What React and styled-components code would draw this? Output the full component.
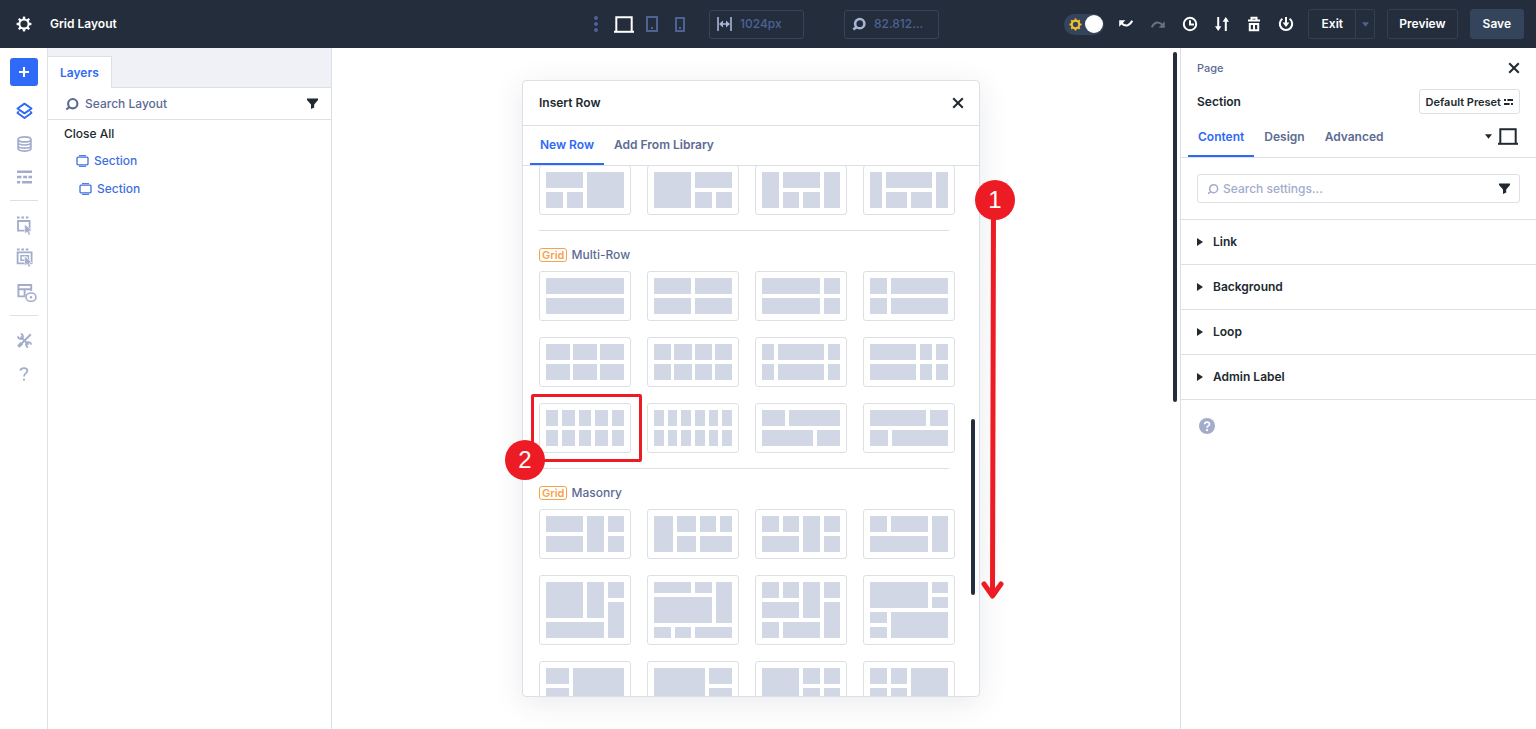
import React from "react";
import styled, { createGlobalStyle, css } from "styled-components";

const c = {
  bar: "#232d3b",
  barLine: "#36435a",
  barMuted: "#4f6296",
  blue: "#2e6af6",
  text: "#20292f",
  muted: "#5c6b94",
  icon: "#a3accb",
  line: "#dcdfe4",
  block: "#d2d7e5",
  orange: "#f7a14c",
  red: "#ed1c24",
};

const GlobalStyle = createGlobalStyle`
  *, *::before, *::after { box-sizing: border-box; }
  body {
    margin: 0;
    background: #fff;
    color: ${c.text};
    font: 500 12px/16px Inter, "Liberation Sans", sans-serif;
  }
  button, input { font: inherit; color: inherit; }
  button { padding: 0; border: 0; background: none; cursor: pointer; }
  svg { display: block; flex: none; }
`;

const Page = styled.div`
  display: flex;
  flex-direction: column;
  height: 100vh;
`;

/* ---------- top bar ---------- */

const TopBar = styled.header`
  display: grid;
  grid-template-columns: 1fr auto 1fr;
  align-items: center;
  flex: none;
  height: 48px;
  padding: 0 12px;
  background: ${c.bar};
  color: #fff;
`;

const BarLeft = styled.div`
  display: flex;
  align-items: center;
  gap: 14px;
`;

const BarTitle = styled.h1`
  margin: 0;
  font-size: 12px;
  line-height: 16px;
  font-weight: 600;
`;

const BarCenter = styled.div`
  display: flex;
  align-items: center;
  padding-right: 15px;
`;

const IconButton = styled.button`
  display: flex;
  align-items: center;
  justify-content: center;
  width: ${(p) => p.$w || 28}px;
  height: 28px;
  color: ${(p) => p.$color || "inherit"};
`;

const Fields = styled.div`
  display: flex;
  gap: 40px;
  margin-left: 15px;
`;

const BarField = styled.label`
  display: flex;
  align-items: center;
  gap: 8px;
  width: 95px;
  height: 29px;
  padding: 0 7px;
  border: 1px solid ${c.barLine};
  border-radius: 3px;
  color: #a9b5d6;

  input {
    flex: 1;
    min-width: 0;
    padding: 0;
    border: 0;
    outline: 0;
    background: none;
    color: ${c.barMuted};
  }
`;

const BarRight = styled.div`
  display: flex;
  align-items: center;
  justify-content: flex-end;
  gap: 12px;
`;

const BarTools = styled.div`
  display: flex;
  align-items: center;
  margin-right: -6px;
`;

const Toggle = styled.label`
  display: flex;
  align-items: center;
  justify-content: space-between;
  width: 40px;
  height: 21px;
  margin-right: 6px;
  padding: 0 1px 0 5px;
  border-radius: 11px;
  background: #34445a;

  input {
    appearance: none;
    width: 18px;
    height: 18px;
    margin: 0;
    border-radius: 50%;
    background: #fff;
  }
`;

const BarButton = styled.button`
  height: 30px;
  padding: 0 ${(p) => (p.$filled ? 12 : 11)}px;
  border: 1px solid ${(p) => (p.$filled ? "#34445a" : "#334052")};
  border-radius: 3px;
  background: ${(p) => (p.$filled ? "#34445a" : "transparent")};
  font-weight: 600;
  white-space: nowrap;
`;

const SplitButton = styled.div`
  display: flex;
  height: 30px;
  border: 1px solid #334052;
  border-radius: 3px;

  button:first-child { width: 46px; font-weight: 600; }
  button:last-child {
    display: flex;
    align-items: center;
    justify-content: center;
    width: 19px;
    border-left: 1px solid #334052;
    color: ${c.barMuted};
  }
`;

/* ---------- body columns ---------- */

const Body = styled.div`
  display: flex;
  flex: 1;
  min-height: 0;
`;

const Rail = styled.nav`
  display: flex;
  flex-direction: column;
  align-items: center;
  flex: none;
  width: 48px;
  padding: 10px 0 0 1px;
  border-right: 1px solid ${c.line};
  color: ${c.icon};

  hr {
    width: 28px;
    margin: 7px 0 8px;
    border: 0;
    border-top: 1px solid ${c.line};
  }
`;

const AddButton = styled.button`
  display: flex;
  align-items: center;
  justify-content: center;
  width: 28px;
  height: 28px;
  margin-bottom: 8px;
  border-radius: 3px;
  background: ${c.blue};
  color: #fff;
`;

const RailButton = styled.button`
  display: flex;
  align-items: center;
  justify-content: center;
  width: 28px;
  height: 33px;
  color: ${(p) => (p.$active ? c.blue : "inherit")};
`;

const LayersPanel = styled.aside`
  flex: none;
  width: 284px;
  border-right: 1px solid ${c.line};
`;

const PanelTabs = styled.div`
  display: flex;
  height: 40px;
  padding-top: 8px;
  border-bottom: 1px solid ${c.line};
  background: #f0f1f7;
`;

const PanelTab = styled.button`
  height: 32px;
  padding: 0 12px;
  border: 1px solid ${c.line};
  border-width: 1px 1px 0 0;
  background: #fff;
  color: ${c.blue};
  font-weight: 600;
`;

const SearchRow = styled.div`
  display: flex;
  align-items: center;
  height: 32px;
  padding: 0 12px 0 17px;
  border-bottom: 1px solid ${c.line};
`;

const SearchLabel = styled.label`
  display: flex;
  align-items: center;
  flex: 1;
  gap: ${(p) => (p.$light ? 4 : 6)}px;
  min-width: 0;
  color: ${(p) => (p.$light ? c.icon : c.muted)};

  input {
    flex: 1;
    min-width: 0;
    padding: 0;
    border: 0;
    outline: 0;
    background: none;
  }
  input::placeholder { color: inherit; opacity: 1; }
`;

const CloseAll = styled.button`
  display: block;
  margin: 6px 16px 5px;
`;

const Tree = styled.ul`
  margin: 0;
  padding: 0 0 0 28px;
  list-style: none;

  & & { padding-left: 3px; }
`;

const TreeItem = styled.button`
  display: flex;
  align-items: center;
  gap: 5px;
  height: 28px;
  color: #3f6fe0;
`;

const Canvas = styled.main`
  display: flex;
  justify-content: center;
  flex: 1;
  min-width: 0;
  padding: 32px 16px;
`;

const CanvasScroll = styled.div`
  flex: none;
  width: 10px;
  padding: 4px 3px;

  &::before {
    content: "";
    display: block;
    width: 4px;
    height: 52%;
    border-radius: 2px;
    background: ${c.bar};
  }
`;

/* ---------- insert row dialog ---------- */

const Dialog = styled.section`
  position: relative;
  display: flex;
  flex-direction: column;
  width: 458px;
  border: 1px solid ${c.line};
  border-radius: 4px;
  box-shadow: 0 6px 30px rgba(43, 50, 80, 0.1);
`;

const DialogHead = styled.header`
  display: flex;
  align-items: center;
  justify-content: space-between;
  flex: none;
  height: 45px;
  padding: 0 14px 0 16px;
  border-bottom: 1px solid ${c.line};

  h2 { margin: 0; font-size: 12px; line-height: 16px; font-weight: 600; }
`;

const CloseButton = styled.button`
  display: flex;
  align-items: center;
  justify-content: center;
  width: ${(p) => p.$w || 14}px;
  height: 16px;
`;

const Tabs = styled.div`
  display: flex;
  align-items: stretch;
  flex: none;
  height: 40px;
  padding: 0 7px;
  border-bottom: 1px solid ${c.line};
`;

const Tab = styled.button`
  padding: 0 10px 2px;
  color: ${c.muted};
  font-weight: 600;
  ${(p) =>
    p.$active &&
    css`
      color: ${c.blue};
      box-shadow: inset 0 -2px ${c.blue};
    `}
`;

const RowList = styled.div`
  flex: 1;
  min-height: 0;
  margin-top: -1px;
  padding: 0 24px 0 16px;
  overflow: hidden;

  hr {
    margin: 15px 6px 15px 0;
    border: 0;
    border-top: 1px solid ${c.line};
  }
`;

const GroupTitle = styled.h3`
  display: flex;
  align-items: center;
  gap: 4px;
  margin: 0 0 8px;
  padding-top: 1px;
  color: ${c.muted};
  font-size: 12px;
  line-height: 16px;
  font-weight: 500;
`;

const GridBadge = styled.span`
  padding: 0 2px;
  border: 1px solid ${c.orange};
  border-radius: 3px;
  color: ${c.orange};
  font-size: 11px;
  line-height: 12px;
  font-weight: 600;
`;

const Cards = styled.div`
  display: grid;
  grid-template-columns: repeat(4, 1fr);
  gap: 16px;
`;

const Card = styled.button`
  display: grid;
  height: ${(p) => (p.$tall ? 70 : 50)}px;
  padding: 6px;
  border: 1px solid ${c.line};
  border-radius: 3px;
  grid-template-columns: ${(p) => p.$cols};
  grid-template-rows: ${(p) => p.$rows};
  grid-template-areas: ${(p) => p.$areas};
  gap: 4px ${(p) => p.$gap}px;
`;

const Block = styled.span`
  grid-area: ${(p) => p.$area};
  background: ${c.block};
`;

const DialogScroll = styled.div`
  position: absolute;
  top: 55%;
  right: 4px;
  width: 4px;
  height: 176px;
  border-radius: 2px;
  background: ${c.bar};
`;

/* ---------- callouts drawn over the dialog ---------- */

const StepBadge = styled.span`
  position: absolute;
  left: ${(p) => p.$x}px;
  top: ${(p) => p.$y}px;
  display: flex;
  align-items: center;
  justify-content: center;
  width: 40px;
  height: 40px;
  border-radius: 50%;
  background: ${c.red};
  color: #fff;
  font: 400 24px/40px "Liberation Sans", sans-serif;
`;

const Highlight = styled.span`
  position: absolute;
  left: 8px;
  top: 313px;
  width: 111px;
  height: 68px;
  border: 3px solid ${c.red};
  border-radius: 2px;
`;

const Arrow = styled.svg`
  position: absolute;
  left: 456px;
  top: 130px;
`;

/* ---------- settings panel ---------- */

const Settings = styled.aside`
  flex: none;
  width: 356px;
  border-left: 1px solid ${c.line};
`;

const SettingsHead = styled.div`
  padding: 12px 16px 4px;
`;

const HeadRow = styled.div`
  display: flex;
  align-items: center;
  justify-content: space-between;
  margin-bottom: ${(p) => p.$after || 0}px;

  h2 { margin: 0; font-size: 12px; line-height: 16px; font-weight: 600; }
`;

const Crumb = styled.a`
  color: ${c.muted};
  font-size: 11px;
  text-decoration: none;
`;

const PresetButton = styled.button`
  display: flex;
  align-items: center;
  gap: 3px;
  height: 25px;
  padding: 0 6px;
  border: 1px solid ${c.line};
  border-radius: 3px;
  font-size: 11px;
  font-weight: 600;
`;

const DeviceButton = styled.button`
  display: flex;
  align-items: center;
  gap: 6px;
  margin-left: auto;
  padding: 0 11px 2px 0;
`;

const SearchBox = styled.div`
  display: flex;
  align-items: center;
  height: 29px;
  margin: 16px;
  padding: 0 9px;
  border: 1px solid ${c.line};
  border-radius: 3px;
`;

const Group = styled.button`
  display: flex;
  align-items: center;
  gap: 10px;
  width: 100%;
  height: 45px;
  padding: 0 16px;
  border-top: 1px solid ${c.line};
  font-weight: 600;
`;

const Help = styled.div`
  padding: 12px 18px;
  border-top: 1px solid ${c.line};
`;

/* ---------- icons ---------- */

const Svg = ({ w = 16, h = w, sw = 2, children, vb }) => (
  <svg width={w} height={h} viewBox={vb || `0 0 ${w} ${h}`} fill="none" stroke="currentColor" strokeWidth={sw} aria-hidden="true">
    {children}
  </svg>
);

const Gear = ({ size = 16, sw = 2 }) => (
  <Svg w={size} vb="0 0 16 16" sw={sw}>
    <circle cx="8" cy="8" r="4.6" />
    {[0, 45, 90, 135, 180, 225, 270, 315].map((a) => (
      <path key={a} d="M8 3.4V.6" strokeWidth="2.4" transform={`rotate(${a} 8 8)`} />
    ))}
  </Svg>
);
const Search = ({ sw = 2, size = 13 }) => (
  <Svg w={size} vb="0 0 13 13" sw={sw}>
    <circle cx="7.2" cy="6.2" r="4.3" />
    <path d="M4.4 9.2L1.2 11.6" />
  </Svg>
);
const Funnel = () => (
  <Svg w={11} sw={0}>
    <path d="M0 .5h11v1.6L7.2 6.4v3L4 11V6.4L0 2.1z" fill="currentColor" />
  </Svg>
);
const Cross = () => (
  <Svg w={12}>
    <path d="M1.200 1.200l9.600 9.600M10.800 1.200l-9.600 9.600" />
  </Svg>
);
const Laptop = () => (
  <Svg w={20} h={17}>
    <path d="M2.3 15V1.200h15.400V15" />
    <path d="M0 15.800h20" />
  </Svg>
);
const Tablet = () => (
  <Svg w={12} h={16}>
    <path d="M1 1h10v14H1z" />
    <path d="M5 12h2" />
  </Svg>
);
const Phone = () => (
  <Svg w={10} h={15}>
    <path d="M1 1h8v13H1z" />
    <path d="M4 11h2" />
  </Svg>
);
const Dots = () => (
  <Svg w={4} h={16} sw={0}>
    {[2, 8, 14].map((y) => <circle key={y} cx="2" cy={y} r="2" fill="currentColor" />)}
  </Svg>
);
const WidthIcon = () => (
  <Svg w={15} h={14} sw={1.6}>
    <path d="M1 0v14M14 0v14M4 7h7" />
    <path d="M2 7l4-3.6v7.2zM13 7L9 3.4v7.2z" fill="currentColor" stroke="none" />
  </Svg>
);
const Undo = ({ flip }) => (
  <Svg w={16} h={12}>
    <g transform={flip ? "rotate(180 8 6)" : undefined}>
      <path d="M3.500 5.200Q9.500 10.800 14.300 2.800" />
      <path d="M1.200 2.200h6.200L1.200 8.800z" fill="currentColor" stroke="none" />
    </g>
  </Svg>
);
const Clock = () => (
  <Svg w={16}>
    <circle cx="8" cy="8" r="6.2" />
    <path d="M8 4.2V8.6h4" />
  </Svg>
);
const UpDown = () => (
  <Svg w={16}>
    <path d="M4.200 1v12M11.800 3v12" />
    <path d="M1 10.200h6.400L4.200 15zM8.600 5.800h6.400L11.800 1z" fill="currentColor" stroke="none" />
  </Svg>
);
const Trash = () => (
  <Svg w={14} h={16}>
    <path d="M1 4.5h12M4.5 4V1.800h5V4M2.800 7v7.200h8.400V7M1.800 8h10.400M7 8v6" />
  </Svg>
);
const Power = () => (
  <Svg w={16}>
    <path d="M4.4 2.8a6.2 6.2 0 1 0 7.2 0" />
    <path d="M8 1v7" />
    <path d="M4.6 6.6h6.8L8 11z" fill="currentColor" stroke="none" />
  </Svg>
);
const CaretDown = ({ w = 8 }) => (
  <Svg w={w} h={5} vb="0 0 8 5" sw={0}>
    <path d="M0 0h8L4 5z" fill="currentColor" />
  </Svg>
);
const CaretRight = () => (
  <Svg w={6} h={8} sw={0}>
    <path d="M0 0l6 4-6 4z" fill="currentColor" />
  </Svg>
);
const Plus = () => (
  <Svg w={10}>
    <path d="M5 0v10M0 5h10" />
  </Svg>
);
const Layers = () => (
  <Svg w={17} h={18} sw={1.9}>
    <path d="M8.5 1.6l7 4.9-7 4.9-7-4.9z" strokeLinejoin="round" />
    <path d="M2.8 9.2L1.5 11l7 5 7-5-1.3-1.8" strokeLinejoin="round" />
  </Svg>
);
const Database = () => (
  <Svg w={15} h={16} sw={1.7}>
    <ellipse cx="7.5" cy="3.4" rx="6.4" ry="2.5" />
    <path d="M1.1 3.4v9.2c0 3.3 12.8 3.3 12.8 0V3.4M1.1 6.6c0 3.2 12.8 3.2 12.8 0M1.1 9.8c0 3.2 12.8 3.2 12.8 0" />
  </Svg>
);
const Wireframe = () => (
  <Svg w={15} h={14} sw={2.6}>
    <path d="M0 1.800h15M0 7h4.500M6.200 7h3.800M11.500 7H15M0 12.200h3.200M5 12.200h10" />
  </Svg>
);
const Cursor = () => <path d="M8.6 8.2l7.4 6.4-3 .4 1.5 3.4-1.9.8-1.4-3.4-2.4 2z" fill="currentColor" stroke="#fff" strokeWidth=".6" />;
const SelectIcon = () => (
  <Svg w={16} h={20} sw={1.8}>
    <path d="M1 1.5h2.6M5.4 1.5H8M9.8 1.5h2.6" strokeWidth="2" />
    <path d="M2 14.6V5h11.6v9.6z" />
    <Cursor />
  </Svg>
);
const MultiSelect = () => (
  <Svg w={17} h={21} sw={1.8}>
    <path d="M1 1.5h2.6M5.4 1.5H8M9.8 1.5h2.6" strokeWidth="2" />
    <path d="M1.6 15.4V4.4h14v11z" />
    <path d="M5 12.2V7.8h7.4v4.4z" strokeWidth="1.5" />
    <Cursor />
  </Svg>
);
const LayoutEye = () => (
  <Svg w={26} h={20} vb="-6 -1 26 20" sw={1.9}>
    <path d="M8 13.4H1.4V2h12.8v6M1.4 6.2h12.8M7.6 6.2v7" />
    <ellipse cx="14" cy="14.2" rx="5" ry="4.2" fill="#fff" strokeWidth="1.6" />
    <circle cx="14" cy="14.2" r="1.2" fill="currentColor" stroke="none" />
  </Svg>
);
const Tools = () => (
  <Svg w={15}>
    <path d="M3.6 3.6l8 8" strokeWidth="2" />
    <path d="M.8 3.4a2.8 2.8 0 0 0 4.6 1.8A2.8 2.8 0 0 0 3.8.8M14.2 11.6a2.8 2.8 0 0 0-4.6-1.8 2.8 2.8 0 0 0 1.6 4.4" strokeWidth="1.8" />
    <path d="M13.8 1.2L1.6 13.6" strokeWidth="2" />
    <path d="M4.8 10.2L1.4 13.6" strokeWidth="3.4" />
  </Svg>
);
const Question = () => (
  <Svg w={10} h={14} sw={1.8}>
    <path d="M1.4 3.6C1.8.2 8.6.2 8.4 3.8 8.3 6.2 5 6.2 5 9.6" />
    <path d="M4 12.6h2" />
  </Svg>
);
const SectionIcon = () => (
  <Svg w={13} h={12} sw={1.3}>
    <rect x="1" y="2.2" width="11" height="7.6" rx="1" />
    <path d="M3 .6h7M3 11.4h7" strokeWidth="1" />
  </Svg>
);
const PresetIcon = () => (
  <Svg w={9} h={8}>
    <path d="M0 2h2M3.4 2H9M0 6h5.6M7 6h2" />
  </Svg>
);
const HelpIcon = () => (
  <Svg w={16} sw={0}>
    <circle cx="8" cy="8" r="8" fill={c.icon} />
    <path d="M5.6 6.2c.2-2.9 5-2.8 4.9 0C10.4 8 8 7.8 8 9.8" stroke="#fff" strokeWidth="1.7" />
    <circle cx="8" cy="12.2" r="1.1" fill="#fff" />
  </Svg>
);

/* ---------- data ---------- */

const fr = (...n) => n.map((v) => `minmax(0, ${v}fr)`).join(" ");
const four = fr(1, 1, 1, 1);
const three = fr(1, 1, 1);

const offsetRows = [
  { areas: ["a a b b", "c d b b"], cols: four },
  { areas: ["a a b b", "a a c d"], cols: four },
  { areas: ["a b b c", "a d e c"], cols: four },
  { areas: ["a b b c", "a d e c"], cols: fr(4, 7, 7, 4) },
];
const multiRows = [
  { areas: ["a", "b"], cols: fr(1) },
  { areas: ["a b", "c d"], cols: fr(1, 1) },
  { areas: ["a a a b", "c c c d"], cols: four },
  { areas: ["a b b b", "c d d d"], cols: four },
  { areas: ["a b c", "d e f"], cols: three, gap: 3 },
  { areas: ["a b c d", "e f g h"], cols: four, gap: 3 },
  { areas: ["a b c", "d e f"], cols: fr(6, 23, 6) },
  { areas: ["a b c", "d e f"], cols: fr(23, 6, 6) },
  { areas: ["a b c d e", "f g h i j"], cols: fr(1, 1, 1, 1, 1) },
  { areas: ["a b c d e f", "g h i j k l"], cols: fr(1, 1, 1, 1, 1, 1) },
  { areas: ["a b b", "c c d"], cols: three },
  { areas: ["a a b", "c d d"], cols: fr(9, 17, 9) },
];
const masonryRows = [
  { areas: ["a a b c", "d d b e"], cols: four },
  { areas: ["a b c d", "a e f f"], cols: fr(19, 19, 16, 12) },
  { areas: ["a b c d", "e e c f"], cols: four },
  { areas: ["a b b c", "d d d c"], cols: four },
  { areas: ["a a b c", "a a b d", "e e e d"], cols: four, tall: true },
  { areas: ["a a b c", "d d d c", "e f g g"], cols: four, rows: fr(11, 26, 11), tall: true },
  { areas: ["a b c d", "e e c f", "g h h f"], cols: four, tall: true },
  { areas: ["a a a b", "a a a c", "d e e e", "f e e e"], cols: four, tall: true },
  { areas: ["a b b", "c b b"], cols: three },
  { areas: ["a a b", "a a c"], cols: three },
  { areas: ["a a b c", "a a d e"], cols: four },
  { areas: ["a b c c", "d e c c"], cols: four },
];

function RowCards({ items, name }) {
  return (
    <Cards>
      {items.map(({ areas, cols, rows, gap = 4, tall }, i) => (
        <Card
          key={i}
          aria-label={`${name} ${i + 1}`}
          $cols={cols}
          $rows={rows || fr(...areas.map(() => 1))}
          $areas={areas.map((r) => `"${r}"`).join(" ")}
          $gap={gap}
          $tall={tall}
        >
          {[...new Set(areas.join(" ").split(" "))].map((a) => (
            <Block key={a} $area={a} />
          ))}
        </Card>
      ))}
    </Cards>
  );
}

export default function App() {
  return (
    <Page>
      <GlobalStyle />
      <TopBar>
        <BarLeft>
          <IconButton $w={24} aria-label="Settings"><Gear /></IconButton>
          <BarTitle>Grid Layout</BarTitle>
        </BarLeft>
        <BarCenter>
          <IconButton $color={c.barMuted} aria-label="More"><Dots /></IconButton>
          <IconButton aria-label="Desktop"><Laptop /></IconButton>
          <IconButton $color={c.barMuted} aria-label="Tablet"><Tablet /></IconButton>
          <IconButton $color={c.barMuted} aria-label="Phone"><Phone /></IconButton>
          <Fields>
            <BarField><WidthIcon /><input aria-label="Canvas width" defaultValue="1024px" /></BarField>
            <BarField><Search sw={2.4} size={14} /><input aria-label="Zoom" defaultValue="82.812..." /></BarField>
          </Fields>
        </BarCenter>
        <BarRight>
          <BarTools>
            <Toggle>
              <IconButton as="span" $w={13} $color="#f2c12e"><Gear size={13} sw={2.6} /></IconButton>
              <input type="checkbox" aria-label="Light mode" defaultChecked />
            </Toggle>
            <IconButton $w={32} aria-label="Undo"><Undo /></IconButton>
            <IconButton $w={32} $color="#68717d" aria-label="Redo"><Undo flip /></IconButton>
            <IconButton $w={32} aria-label="History"><Clock /></IconButton>
            <IconButton $w={32} aria-label="Portability"><UpDown /></IconButton>
            <IconButton $w={32} aria-label="Clear"><Trash /></IconButton>
            <IconButton $w={32} aria-label="Save to library"><Power /></IconButton>
          </BarTools>
          <SplitButton>
            <button>Exit</button>
            <button aria-label="Exit options"><CaretDown w={7} /></button>
          </SplitButton>
          <BarButton>Preview</BarButton>
          <BarButton $filled>Save</BarButton>
        </BarRight>
      </TopBar>

      <Body>
        <Rail>
          <AddButton aria-label="Add"><Plus /></AddButton>
          <RailButton $active aria-label="Layers"><Layers /></RailButton>
          <RailButton aria-label="Data"><Database /></RailButton>
          <RailButton aria-label="Wireframe"><Wireframe /></RailButton>
          <hr />
          <RailButton aria-label="Select"><SelectIcon /></RailButton>
          <RailButton aria-label="Multi select"><MultiSelect /></RailButton>
          <RailButton aria-label="View layout"><LayoutEye /></RailButton>
          <hr />
          <RailButton aria-label="Tools"><Tools /></RailButton>
          <RailButton aria-label="Help"><Question /></RailButton>
        </Rail>

        <LayersPanel>
          <PanelTabs><PanelTab>Layers</PanelTab></PanelTabs>
          <SearchRow>
            <SearchLabel>
              <Search size={14} />
              <input type="text" placeholder="Search Layout" aria-label="Search Layout" />
            </SearchLabel>
            <IconButton $w={14} $color={c.text} aria-label="Filter layers"><Funnel /></IconButton>
          </SearchRow>
          <CloseAll>Close All</CloseAll>
          <Tree>
            <li>
              <TreeItem><SectionIcon />Section</TreeItem>
              <Tree>
                <li><TreeItem><SectionIcon />Section</TreeItem></li>
              </Tree>
            </li>
          </Tree>
        </LayersPanel>

        <Canvas>
          <Dialog role="dialog" aria-labelledby="insert-row">
            <DialogHead>
              <h2 id="insert-row">Insert Row</h2>
              <CloseButton aria-label="Close"><Cross /></CloseButton>
            </DialogHead>
            <Tabs>
              <Tab $active>New Row</Tab>
              <Tab>Add From Library</Tab>
            </Tabs>
            <RowList>
              <RowCards items={offsetRows} name="Offset row" />
              <hr />
              <GroupTitle><GridBadge>Grid</GridBadge>Multi-Row</GroupTitle>
              <RowCards items={multiRows} name="Multi-row" />
              <hr />
              <GroupTitle><GridBadge>Grid</GridBadge>Masonry</GroupTitle>
              <RowCards items={masonryRows} name="Masonry" />
            </RowList>
            <DialogScroll />
            <Arrow width="28" height="392" viewBox="0 0 28 392" fill="none" stroke={c.red} strokeWidth="5" strokeLinecap="round" strokeLinejoin="round" aria-hidden="true">
              <path d="M14.5 0L13.5 384" />
              <path d="M5 373l8.500 12L22 373" />
            </Arrow>
            <Highlight />
            <StepBadge $x={452} $y={99}>1</StepBadge>
            <StepBadge $x={-18} $y={359}>2</StepBadge>
          </Dialog>
        </Canvas>
        <CanvasScroll />

        <Settings>
          <SettingsHead>
            <HeadRow $after={13}>
              <Crumb href="#page">Page</Crumb>
              <CloseButton $w={12} aria-label="Close settings"><Cross /></CloseButton>
            </HeadRow>
            <HeadRow>
              <h2>Section</h2>
              <PresetButton>Default Preset<PresetIcon /></PresetButton>
            </HeadRow>
          </SettingsHead>
          <Tabs>
            <Tab $active>Content</Tab>
            <Tab>Design</Tab>
            <Tab>Advanced</Tab>
            <DeviceButton aria-label="Preview device"><CaretDown w={7} /><Laptop /></DeviceButton>
          </Tabs>
          <SearchBox>
            <SearchLabel $light>
              <Search sw={1.7} size={12} />
              <input type="text" placeholder="Search settings..." aria-label="Search settings" />
            </SearchLabel>
            <IconButton $w={12} $color={c.text} aria-label="Filter settings"><Funnel /></IconButton>
          </SearchBox>
          {["Link", "Background", "Loop", "Admin Label"].map((g) => (
            <Group key={g}><CaretRight />{g}</Group>
          ))}
          <Help><IconButton as="a" href="#help" $w={16} aria-label="Help"><HelpIcon /></IconButton></Help>
        </Settings>
      </Body>
    </Page>
  );
}
